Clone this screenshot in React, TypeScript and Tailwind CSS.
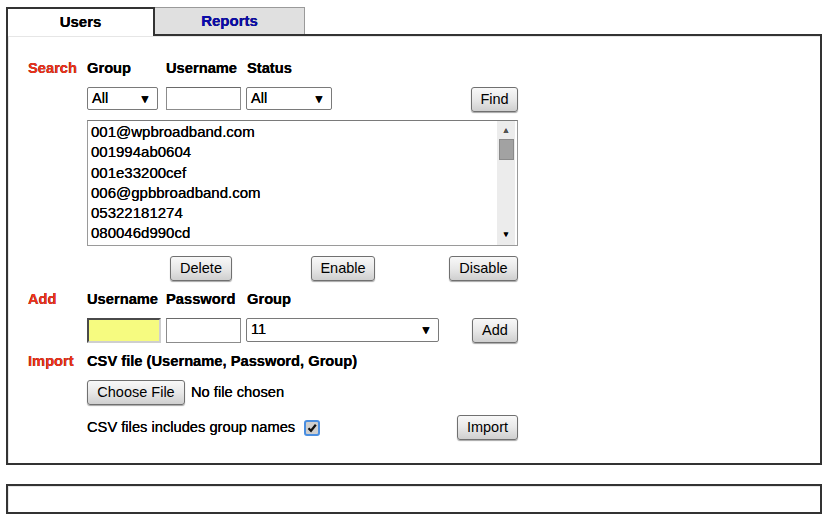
import React from 'react';

const users = [
  '001@wpbroadband.com',
  '001994ab0604',
  '001e33200cef',
  '006@gpbbroadband.com',
  '05322181274',
  '080046d990cd',
];

function Btn({ label, className = '' }: { label: string; className?: string }) {
  return (
    <button
      type="button"
      className={`h-[25px] bg-linear-to-b from-[#f8f8f8] via-[#e8e8e8] to-[#cfcfcf] border border-[#707070] rounded-[3px] shadow-[0_1px_1px_rgba(0,0,0,0.35)] text-[14.5px] text-black leading-none flex items-center justify-center ${className}`}
    >
      {label}
    </button>
  );
}

function Select({ value, className = '' }: { value: string; className?: string }) {
  return (
    <div
      className={`h-[23px] bg-white border border-[#7a7a7a] rounded-[2px] flex items-center justify-between pl-[4px] pr-[6px] text-[14.5px] ${className}`}
    >
      <span>{value}</span>
      <span className="text-[12px] leading-none">▼</span>
    </div>
  );
}

export default function App() {
  return (
    <div className="w-[827px] h-[518px] bg-white text-black font-['Liberation_Sans',Arial,sans-serif] overflow-hidden [text-shadow:0_0_0.4px_#000]">
      <div className="pt-[7px] pl-[6px] pr-[5px]">
        {/* tabs */}
        <div className="flex h-[27px]">
          <div className="w-[149px] h-[29px] -mb-[2px] relative z-10 bg-white border-2 border-b-0 border-[#333] flex items-center justify-center font-bold text-[15px]">
            Users
          </div>
          <div className="w-[150px] h-[27px] bg-[#e0e0e0] border border-l-0 border-b-0 border-[#9a9a9a] flex items-center justify-center font-bold text-[15px] text-[#0b0bb0]">
            Reports
          </div>
        </div>

        {/* main panel */}
        <div className="h-[431px] border-2 border-[#333] shadow-[inset_1px_1px_0_#e6e6e6] pl-[20px] pt-[22px]">
          <div className="grid grid-cols-[59px_431px] text-[14.7px]">
            {/* Search */}
            <div className="h-[20px] flex items-center font-bold text-[#f5321a]">Search</div>
            <div className="h-[20px] flex items-center font-bold">
              <span className="w-[79px]">Group</span>
              <span className="w-[81px]">Username</span>
              <span>Status</span>
            </div>

            <div />
            <div className="mt-[9px] flex items-start">
              <Select value="All" className="w-[71px]" />
              <input className="ml-[8px] w-[75px] h-[23px] border border-[#8c8c8c] border-t-[#6a6a6a] outline-none" />
              <Select value="All" className="ml-[5px] w-[86px]" />
              <Btn label="Find" className="ml-auto w-[47px]" />
            </div>

            <div />
            <div className="mt-[8px] h-[126px] border border-[#9a9a9a] border-t-[#7a7a7a] flex">
              <div className="flex-1 pl-[3px] pt-[1px] text-[15px] leading-[20.25px]">
                {users.map((u) => (
                  <div key={u}>{u}</div>
                ))}
              </div>
              <div className="w-[18px] mr-[2px] bg-[#ececec] flex flex-col items-center">
                <span className="mt-[6px] text-[8px] leading-none text-[#555]">▲</span>
                <div className="mt-[4px] w-[15px] h-[21px] bg-[#a2a2a2] border border-[#8a8a8a]" />
                <span className="mt-auto mb-[6px] text-[8px] leading-none text-black">▼</span>
              </div>
            </div>

            <div />
            <div className="mt-[10px] flex">
              <Btn label="Delete" className="ml-[83px] w-[62px]" />
              <Btn label="Enable" className="ml-[79px] w-[64px]" />
              <Btn label="Disable" className="ml-auto w-[69px]" />
            </div>

            {/* Add */}
            <div className="mt-[8px] h-[20px] flex items-center font-bold text-[#f5321a]">Add</div>
            <div className="mt-[8px] h-[20px] flex items-center font-bold">
              <span className="w-[79px]">Username</span>
              <span className="w-[81px]">Password</span>
              <span>Group</span>
            </div>

            <div />
            <div className="mt-[9px] flex items-start">
              <input className="w-[74px] h-[25px] bg-[#f6fb80] border-2 border-[#4a4a4a] border-r-[#cfcfcf] border-b-[#cfcfcf] outline-none" />
              <input className="ml-[5px] w-[75px] h-[25px] border border-[#8c8c8c] border-t-[#6a6a6a] outline-none" />
              <Select value="11" className="ml-[5px] w-[193px] h-[24px]" />
              <Btn label="Add" className="ml-auto w-[46px]" />
            </div>

            {/* Import */}
            <div className="mt-[8px] h-[20px] flex items-center font-bold text-[#f5321a]">Import</div>
            <div className="mt-[8px] h-[20px] flex items-center font-bold">CSV file (Username, Password, Group)</div>

            <div />
            <div className="mt-[9px] flex items-center">
              <Btn label="Choose File" className="w-[98px]" />
              <span className="ml-[6px]">No file chosen</span>
            </div>

            <div />
            <div className="mt-[10px] flex items-center">
              <span>CSV files includes group names</span>
              <span className="ml-[9px] mt-[1px] w-[16px] h-[16px] rounded-[3px] border-2 border-[#4a8ee0] bg-[#cfcfcf] flex items-center justify-center">
                <svg width="10" height="10" viewBox="0 0 10 10">
                  <path d="M1.5 5.2 L4 7.8 L8.8 1.8" fill="none" stroke="#111" strokeWidth="2.2" />
                </svg>
              </span>
              <Btn label="Import" className="ml-auto w-[61px]" />
            </div>
          </div>
        </div>

        {/* bottom panel */}
        <div className="mt-[19px] h-[30px] border-2 border-[#333] shadow-[inset_1px_1px_0_#e6e6e6]" />
      </div>
    </div>
  );
}
